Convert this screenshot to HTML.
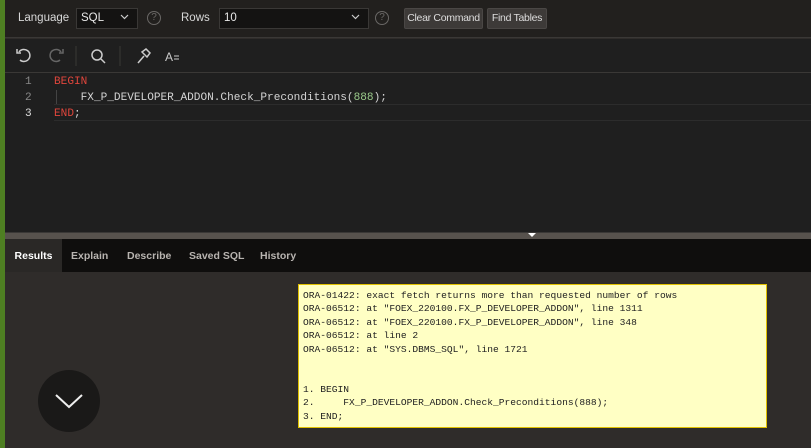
<!DOCTYPE html>
<html><head><meta charset="utf-8"><style>
*{margin:0;padding:0;box-sizing:border-box}
body{width:811px;height:448px;overflow:hidden;background:#2f2c2a;font-family:"Liberation Sans",sans-serif;position:relative}
.abs{position:absolute}
.green{left:0;top:0;width:5px;height:448px;background:#4e7f22}
.top{left:5px;top:0;width:806px;height:38px;background:#22201e;border-bottom:1px solid #3a3836}
.lbl{color:#d8d8d8;font-size:11.5px}
.sel{background:#141312;border:1px solid #3a3836;color:#e8e8e8;font-size:11.5px;padding-left:4px;line-height:19px;height:21px}
.chev{position:absolute;right:8px;top:5px}
.q{width:14px;height:14px;border:1px solid #6a6866;border-radius:50%;color:#6a6866;font-size:10px;text-align:center;line-height:12px}
.btn{background:#3d3a38;border:1px solid #4a4745;color:#ddd;font-size:10.5px;letter-spacing:-0.3px;height:21px;line-height:19px;text-align:center;border-radius:2px;white-space:nowrap}
.tb2{left:5px;top:39px;width:806px;height:34px;background:#1f1f1f;border-bottom:1px solid #3a3836}
.ed{left:5px;top:73px;width:806px;height:159px;background:#1f1f1f}
.code{font-family:"Liberation Mono",monospace;font-size:11.1px;color:#d4d4d4}
.split{left:5px;top:232px;width:806px;height:7px;background:#57524d;border-top:1px solid #3a3836}
.tabs{left:5px;top:239px;width:806px;height:33px;background:#0f0e0d}
.tab{position:absolute;top:0;height:33px;line-height:35px;font-size:10.5px;font-weight:bold;color:#b8b4b0}
.err{left:298px;top:284px;width:469px;height:144px;background:#ffffc4;border:1.5px solid #e0c000;padding:4px 0 0 4px;font-family:"Liberation Mono",monospace;font-size:9.6px;line-height:13.4px;color:#222;white-space:pre}
.circ{left:38px;top:370px;width:62px;height:62px;border-radius:50%;background:#1a1918}
</style></head><body>
<div class="abs green"></div>
<div class="abs top"></div>
<div class="abs lbl" style="left:18px;top:12px">Language</div>
<div class="abs sel" style="left:76px;top:8px;width:62px">SQL<svg class="chev" width="9" height="6" viewBox="0 0 9 6"><path d="M1 1l3.5 3.5L8 1" stroke="#ccc" fill="none" stroke-width="1.2"/></svg></div>
<div class="abs q" style="left:147px;top:11px">?</div>
<div class="abs lbl" style="left:181px;top:12px">Rows</div>
<div class="abs sel" style="left:219px;top:8px;width:150px">10<svg class="chev" width="9" height="6" viewBox="0 0 9 6"><path d="M1 1l3.5 3.5L8 1" stroke="#ccc" fill="none" stroke-width="1.2"/></svg></div>
<div class="abs q" style="left:375px;top:11px">?</div>
<div class="abs btn" style="left:404px;top:8px;width:79px">Clear Command</div>
<div class="abs btn" style="left:487px;top:8px;width:60px">Find Tables</div>

<div class="abs tb2"></div>
<svg class="abs" style="left:15px;top:46px" width="180" height="20" viewBox="0 0 180 20">
<path d="M4 6 A6 6 0 1 1 5 14" stroke="#ccc" fill="none" stroke-width="1.5"/><path d="M2 3v4h4" stroke="#ccc" fill="none" stroke-width="1.5"/>
<path d="M46 6 A6 6 0 1 0 45 14" stroke="#666" fill="none" stroke-width="1.5"/><path d="M48 3v4h-4" stroke="#666" fill="none" stroke-width="1.5"/>
<line x1="61" y1="-4" x2="61" y2="22" stroke="#3a3836"/>
<circle cx="82" cy="9" r="5" stroke="#ccc" fill="none" stroke-width="1.5"/><path d="M86 13l4 4" stroke="#ccc" stroke-width="1.5"/>
<line x1="105" y1="-4" x2="105" y2="22" stroke="#3a3836"/>
<path d="M123 17l6-7M127 6l4-3 4 4-3 4z" stroke="#ccc" fill="none" stroke-width="1.5"/>
<text x="150" y="15" fill="#ccc" font-size="12" font-family="Liberation Sans">A</text><path d="M159 10h5M159 13h5" stroke="#ccc"/>
</svg>

<div class="abs ed"></div>
<div class="abs" style="left:54px;top:104px;width:757px;height:17px;border-top:1px solid #2c2c2c;border-bottom:1px solid #2c2c2c"></div>
<div class="abs" style="left:56px;top:90px;width:1px;height:14px;background:#444"></div>
<div class="abs code" style="left:25px;top:74px;line-height:16px;color:#888">1<br>2<br><span style="color:#ddd">3</span></div>
<div class="abs code" style="left:54px;top:74px;line-height:16px;white-space:pre"><span style="color:#e0463c">BEGIN</span>
    FX_P_DEVELOPER_ADDON.Check_Preconditions(<span style="color:#9ccc8c">888</span>);
<span style="color:#e0463c">END</span>;</div>

<div class="abs split"></div>
<svg class="abs" style="left:528px;top:233px" width="8" height="5"><path d="M0 0h8l-4 4z" fill="#fff"/></svg>
<div class="abs tabs">
<div class="tab" style="left:0;width:57px;background:#2a2826;color:#fff;text-align:center">Results</div>
<div class="tab" style="left:66px">Explain</div>
<div class="tab" style="left:122px">Describe</div>
<div class="tab" style="left:184px">Saved SQL</div>
<div class="tab" style="left:255px">History</div>
</div>

<div class="abs err">ORA-01422: exact fetch returns more than requested number of rows
ORA-06512: at "FOEX_220100.FX_P_DEVELOPER_ADDON", line 1311
ORA-06512: at "FOEX_220100.FX_P_DEVELOPER_ADDON", line 348
ORA-06512: at line 2
ORA-06512: at "SYS.DBMS_SQL", line 1721


1. BEGIN
2.     FX_P_DEVELOPER_ADDON.Check_Preconditions(888);
3. END;</div>

<div class="abs circ"></div>
<svg class="abs" style="left:55px;top:393px" width="28" height="16"><path d="M1 2l13 12L27 2" stroke="#eee" fill="none" stroke-width="2"/></svg>
</body></html>
